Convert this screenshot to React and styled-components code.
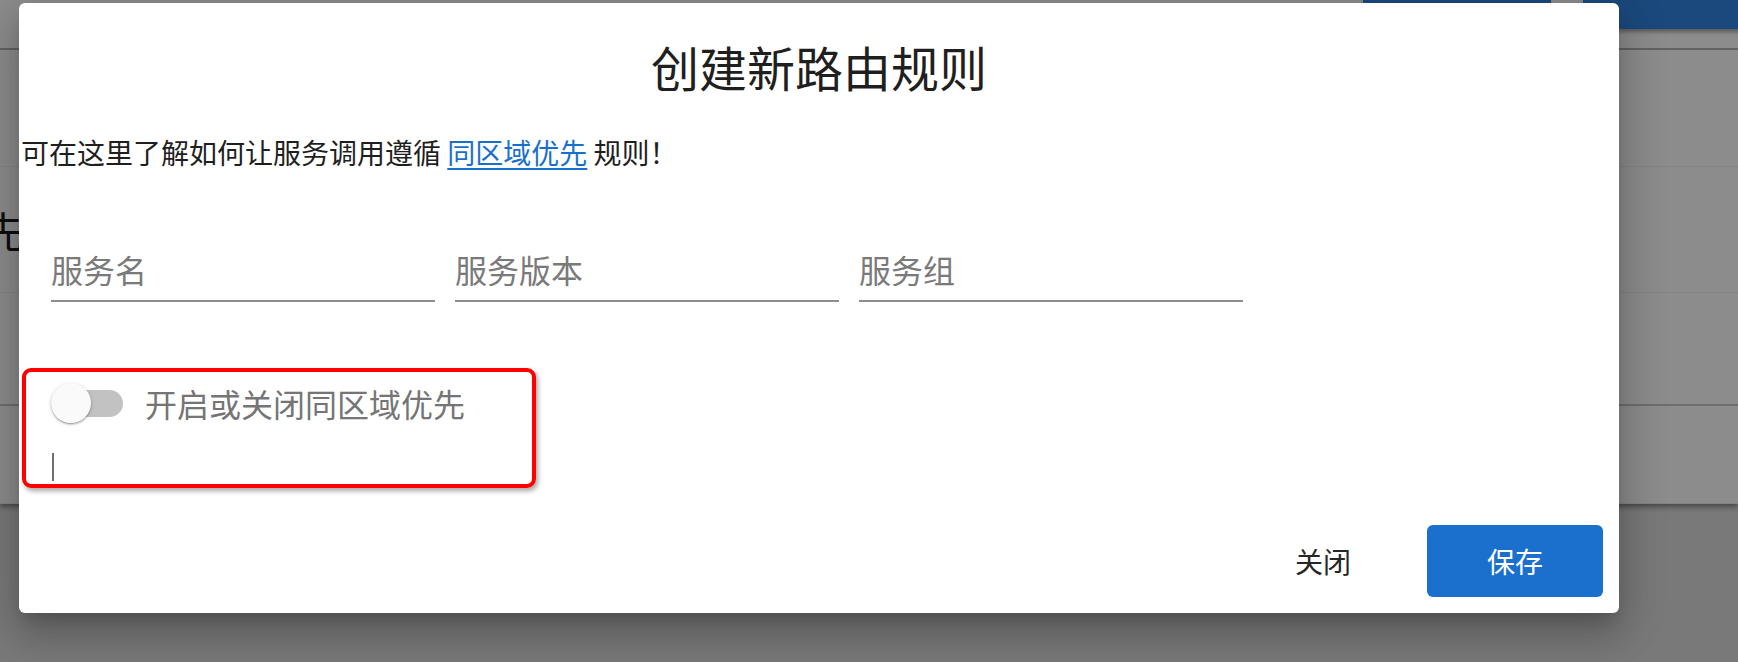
import React from "react";
import styled, { createGlobalStyle } from "styled-components";

const Global = createGlobalStyle`
  html, body { margin: 0; padding: 0; }
  body { font-family: "Noto Sans CJK SC", "Noto Sans", sans-serif; }
  * { box-sizing: border-box; }
`;

const Screen = styled.div`
  position: relative;
  width: 1738px;
  height: 662px;
  overflow: hidden;
  background: #dcdcdc;
`;

const TopBar = styled.div`
  height: 50px;
  background: #ffffff;
  border-bottom: 2px solid #b8b8b8;
  display: flex;
  justify-content: flex-end;
  align-items: flex-start;
  gap: 32px;
  margin-right: -40px;
`;

const BarButton = styled.div`
  width: ${(p) => p.$w}px;
  height: 29px;
  background: #3286e4;
  box-shadow: 0 3px 4px rgba(0, 0, 0, 0.35);
`;

const Card = styled.div`
  background: #ffffff;
  box-shadow: 0 3px 5px rgba(0, 0, 0, 0.4);
  display: flex;
  flex-direction: column;
`;

const CardRow = styled.div`
  height: ${(p) => p.$h}px;
  border-bottom: ${(p) => (p.$line ? "2px solid #c8c8c8" : "1px solid #f0f0f0")};
  display: flex;
  align-items: center;
`;

const PageHeading = styled.div`
  font-size: 42px;
  color: #1a1a1a;
  text-indent: -144px;
  white-space: nowrap;
`;

const Backdrop = styled.div`
  position: absolute;
  inset: 0;
  background: rgba(0, 0, 0, 0.45);
`;

const Dialog = styled.div`
  position: absolute;
  left: 19px;
  top: 3px;
  width: 1600px;
  height: 610px;
  background: #ffffff;
  border-radius: 6px;
  box-shadow: 0px 11px 15px -7px rgba(0, 0, 0, 0.2),
    0px 24px 38px 3px rgba(0, 0, 0, 0.14), 0px 9px 46px 8px rgba(0, 0, 0, 0.12);
  display: flex;
  flex-direction: column;
`;

const Title = styled.h2`
  margin: 0;
  padding-top: 31px;
  font-size: 48px;
  font-weight: 400;
  line-height: 64px;
  text-align: center;
  color: #1f1f1f;
`;

const Description = styled.p`
  margin: 34px 0 0;
  padding-left: 2px;
  font-size: 28px;
  line-height: 40px;
  color: #1f1f1f;
`;

const Link = styled.a`
  color: #1a6fcc;
  text-decoration: underline;
  text-underline-offset: 4px;
  text-decoration-thickness: 2px;
`;

const FieldRow = styled.div`
  margin-top: 75px;
  padding-left: 32px;
  display: flex;
  gap: 20px;
`;

const Field = styled.div`
  width: 384px;
  padding-bottom: 9px;
  border-bottom: 2px solid #8e8e8e;
  font-size: 32px;
  line-height: 44px;
  color: #7a7a7a;
`;

const ToggleRow = styled.label`
  margin-top: 79px;
  padding-left: 32px;
  height: 44px;
  display: flex;
  align-items: center;
  gap: 22px;
  font-size: 32px;
  color: #757575;
`;

const Track = styled.span`
  position: relative;
  width: 72px;
  height: 27px;
  border-radius: 14px;
  background: #c2c2c2;
`;

const Thumb = styled.span`
  position: absolute;
  left: 0;
  top: 50%;
  width: 40px;
  height: 40px;
  margin-top: -20px;
  border-radius: 50%;
  background: #fafafa;
  box-shadow: 0px 2px 2px -1px rgba(0, 0, 0, 0.25),
    0px 1px 2px 0px rgba(0, 0, 0, 0.16), 0px 1px 4px 0px rgba(0, 0, 0, 0.14);
`;

const Caret = styled.span`
  display: block;
  margin: 28px 0 0 33px;
  width: 2px;
  height: 28px;
  background: #6f6f6f;
`;

const Actions = styled.div`
  margin-top: auto;
  padding: 0 16px 16px;
  display: flex;
  justify-content: flex-end;
  gap: 16px;
`;

const ActionButton = styled.button`
  width: 176px;
  height: 72px;
  border: none;
  border-radius: 6px;
  font-family: inherit;
  font-size: 28px;
  cursor: pointer;
  background: ${(p) => (p.$primary ? "#1b6fcd" : "transparent")};
  color: ${(p) => (p.$primary ? "#ffffff" : "#262626")};
`;

const Highlight = styled.div`
  position: absolute;
  left: 3px;
  top: 365px;
  width: 514px;
  height: 120px;
  border: 4px solid #ff0000;
  border-radius: 9px;
  box-shadow: 2px 3px 5px rgba(0, 0, 0, 0.35);
  pointer-events: none;
`;

export default function App() {
  return (
    <Screen>
      <Global />
      <TopBar>
        <BarButton $w={188} />
        <BarButton $w={195} />
      </TopBar>
      <Card>
        <CardRow $h={117} />
        <CardRow $h={126}>
          <PageHeading>区域优先</PageHeading>
        </CardRow>
        <CardRow $h={113} $line />
        <CardRow $h={98} />
      </Card>
      <Backdrop />
      <Dialog>
        <Title>创建新路由规则</Title>
        <Description>
          可在这里了解如何让服务调用遵循 <Link href="#">同区域优先</Link> 规则！
        </Description>
        <FieldRow>
          <Field>服务名</Field>
          <Field>服务版本</Field>
          <Field>服务组</Field>
        </FieldRow>
        <ToggleRow>
          <Track>
            <Thumb />
          </Track>
          开启或关闭同区域优先
        </ToggleRow>
        <Caret />
        <Actions>
          <ActionButton>关闭</ActionButton>
          <ActionButton $primary>保存</ActionButton>
        </Actions>
        <Highlight />
      </Dialog>
    </Screen>
  );
}
